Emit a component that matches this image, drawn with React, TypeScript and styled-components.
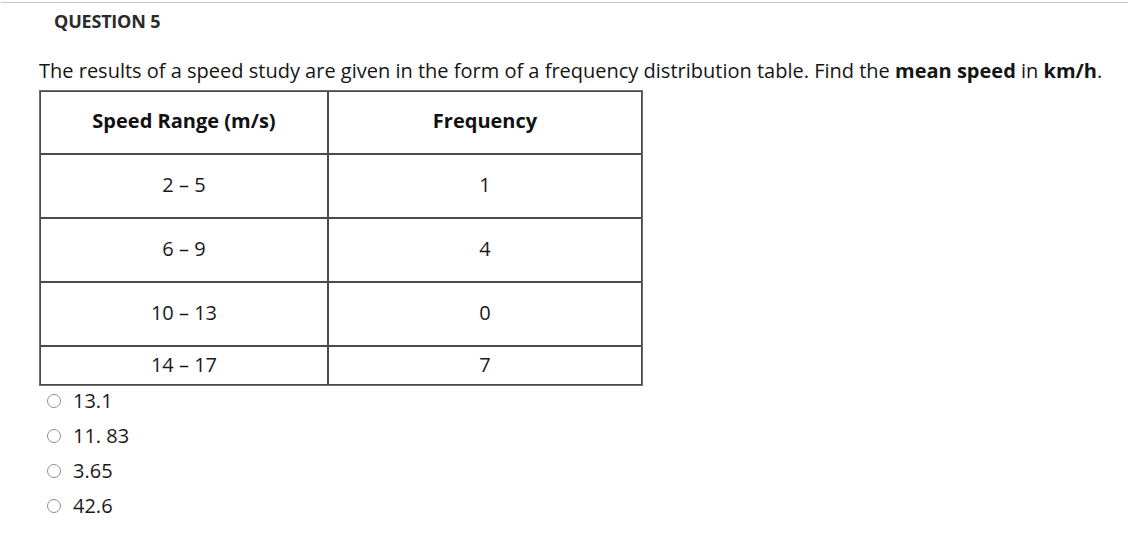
import styled, { createGlobalStyle } from "styled-components";

const GlobalStyle = createGlobalStyle`
  html, body {
    margin: 0;
    padding: 0;
    background: #fff;
  }
  body {
    font-family: "Open Sans", "Liberation Sans", sans-serif;
    color: #111;
  }
`;

const Page = styled.div`
  width: 1128px;
  height: 533px;
  overflow: hidden;
  padding-top: 2px;
  box-sizing: border-box;
`;

const Rule = styled.div`
  height: 1px;
  margin-left: 1px;
  background: #c8c8c8;
`;

const Heading = styled.h3`
  margin: 0;
  padding: 3px 0 0 54px;
  font-size: 18px;
  line-height: 30px;
  font-weight: 700;
  color: #2b2b2b;
  letter-spacing: -0.2px;
`;

const Body = styled.div`
  padding: 0 0 0 39px;
`;

const Prompt = styled.p`
  margin: 21px 0 5px;
  font-size: 20px;
  line-height: 28px;
  color: #151515;
  white-space: nowrap;

  strong {
    font-weight: 700;
  }
`;

const Table = styled.table`
  border-collapse: separate;
  border-spacing: 0;
  border: 1px solid #6e6e6e;
  width: 604px;
  table-layout: fixed;
`;

const Cell = styled.td<{ $h: number; $wide?: boolean }>`
  box-sizing: border-box;
  height: ${(p) => p.$h}px;
  width: ${(p) => (p.$wide ? "288px" : "auto")};
  padding: 0 0 ${(p) => (p.$h > 50 ? 4 : 2)}px;
  border: 1px solid #4a4a4a;
  text-align: center;
  vertical-align: middle;
  font-size: 20px;
  color: #1a1a1a;
`;

const HeadCell = styled(Cell).attrs({ as: "th" })`
  font-weight: 700;
  color: #111;
`;

const Options = styled.div`
  display: flex;
  flex-direction: column;
  margin-top: -3px;
  padding-left: 8px;
`;

const Option = styled.label`
  display: flex;
  align-items: center;
  height: 35px;
  font-size: 20px;
  color: #1a1a1a;
`;

const Radio = styled.span`
  flex: none;
  width: 12px;
  height: 12px;
  border: 1px solid #8f8f8f;
  border-radius: 50%;
  margin-right: 12px;
  background: #fff;
`;

const rows: [string, string, number][] = [
  ["2 – 5", "1", 64],
  ["6 – 9", "4", 64],
  ["10 – 13", "0", 64],
  ["14 – 17", "7", 39],
];

const answers = ["13.1", "11. 83", "3.65", "42.6"];

export default function App() {
  return (
    <Page>
      <GlobalStyle />
      <Rule />
      <Heading>QUESTION 5</Heading>
      <Body>
        <Prompt>
          The results of a speed study are given in the form of a frequency distribution table. Find the{" "}
          <strong>mean speed</strong> in <strong>km/h</strong>.
        </Prompt>
        <Table>
          <thead>
            <tr>
              <HeadCell $h={63} $wide>
                Speed Range (m/s)
              </HeadCell>
              <HeadCell $h={63}>Frequency</HeadCell>
            </tr>
          </thead>
          <tbody>
            {rows.map(([range, freq, h]) => (
              <tr key={range}>
                <Cell $h={h} $wide>
                  {range}
                </Cell>
                <Cell $h={h}>{freq}</Cell>
              </tr>
            ))}
          </tbody>
        </Table>
        <Options>
          {answers.map((a) => (
            <Option key={a}>
              <Radio />
              {a}
            </Option>
          ))}
        </Options>
      </Body>
    </Page>
  );
}
